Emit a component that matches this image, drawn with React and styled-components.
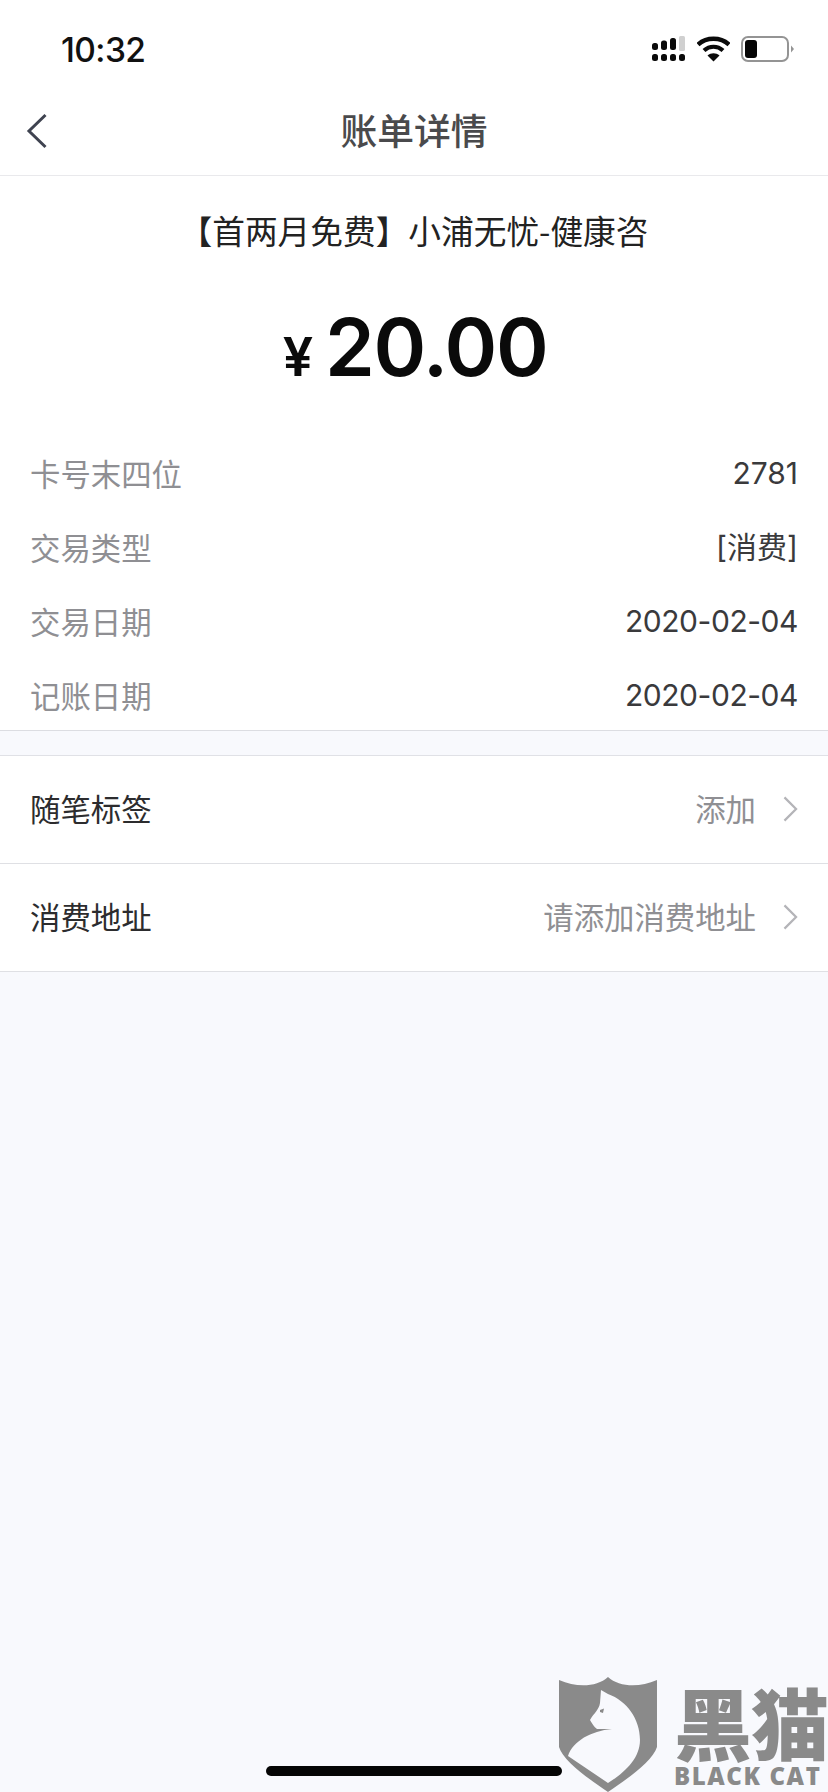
import React from "react";
import styled, { createGlobalStyle } from "styled-components";

const Global = createGlobalStyle`
  html, body { margin: 0; padding: 0; background: #f8f9fd; }
  body { font-family: "Inter", "Noto Sans CJK SC", sans-serif; }
`;
const CJK = `"Noto Sans CJK SC", "Noto Sans", sans-serif`;
const LATIN_CJK = `"Inter", "Noto Sans CJK SC", sans-serif`;

const Page = styled.div`
  position: relative;
  width: 828px;
  height: 1792px;
  overflow: hidden;
  background: #f8f9fd;
  display: flex;
  flex-direction: column;
`;
const StatusBar = styled.div`
  height: 90px;
  background: #fff;
  display: flex;
  align-items: center;
  justify-content: space-between;
  padding: 8px 33px 0 61px;
  box-sizing: border-box;
`;
const Clock = styled.span`
  font: 500 33.5px/1 "Inter", sans-serif;
  color: #111;
  letter-spacing: -0.6px;
  padding-top: 4px;
`;
const StatusIcons = styled.div`
  display: flex;
  align-items: center;
  gap: 11.5px;
`;
const NavBar = styled.header`
  position: relative;
  height: 86px;
  background: #fff;
  border-bottom: 1px solid #e9e9ec;
  box-sizing: border-box;
  display: flex;
  align-items: center;
  justify-content: center;
  padding-bottom: 6px;
`;
const BackButton = styled.button`
  position: absolute;
  left: 24px;
  top: 23px;
  padding: 0;
  border: 0;
  background: none;
  width: 26px;
  height: 38px;
`;
const NavTitle = styled.h1`
  margin: 0;
  font: 500 36.8px/1.2 ${CJK};
  color: #4a4a4c;
`;
const Summary = styled.section`
  background: #fff;
  border-bottom: 1px solid #dcdde2;
`;
const Merchant = styled.div`
  text-align: center;
  font: 400 32.7px/44px ${CJK};
  color: #222;
  padding-top: 32px;
  white-space: nowrap;
`;
const Amount = styled.div`
  display: flex;
  align-items: baseline;
  justify-content: center;
  padding: 39px 0 0 2px;
  height: 111px;
  color: #0a0a0a;
`;
const Currency = styled.span`
  font: 600 54px/1 "Inter", sans-serif;
  margin-right: 12px;
`;
const Value = styled.span`
  font: 600 80px/112px "Inter", sans-serif;
  letter-spacing: -1.4px;
`;
const InfoList = styled.div`
  padding: 34px 30px 0;
  margin-bottom: -2px;
`;
const InfoRow = styled.div`
  display: flex;
  align-items: center;
  justify-content: space-between;
  height: 74px;
`;
const InfoLabel = styled.span`
  font: 400 30.4px/1 ${CJK};
  color: #8f8f93;
`;
const InfoValue = styled.span`
  font: 400 30px/1 ${LATIN_CJK};
  color: #3a3a3c;
  letter-spacing: ${(p) => (p.$tight ? "-0.45px" : "0")};
`;
const ActionList = styled.section`
  margin-top: 24px;
  background: #fff;
  border-top: 1px solid #e0e1e6;
`;
const ActionRow = styled.div`
  height: 108px;
  box-sizing: border-box;
  border-bottom: 1px solid #dfe0e4;
  display: flex;
  align-items: center;
  justify-content: space-between;
  padding: 0 30px 2px;
`;
const ActionLabel = styled.span`
  font: 400 30.4px/1 ${CJK};
  color: #2c2c2e;
`;
const ActionValue = styled.span`
  display: flex;
  align-items: center;
  gap: 27px;
  font: 400 30.4px/1 ${CJK};
  color: #8f8f93;
`;
const HomeIndicator = styled.div`
  position: absolute;
  left: 266px;
  top: 1766px;
  width: 296px;
  height: 10px;
  border-radius: 5px;
  background: #050505;
`;
const Watermark = styled.div`
  position: absolute;
  right: 0;
  top: 1677px;
  width: 269px;
  display: flex;
  gap: 17px;
  color: #8a8a8a;
`;
const BrandText = styled.div`
  display: flex;
  flex-direction: column;
  align-items: flex-start;
`;
const BrandCn = styled.div`
  font: 900 78px/72px ${CJK};
  letter-spacing: -1px;
  margin-top: 8px;
  white-space: nowrap;
`;
const BrandEn = styled.div`
  font: 800 24px/24px "Open Sans", sans-serif;
  letter-spacing: 1.6px;
  white-space: nowrap;
  margin-top: 7px;
`;

const Signal = () => (
  <svg width="34" height="26" viewBox="0 0 34 26">
    <g fill="#0a0a0a">
      <rect x="1" y="7" width="6" height="7" rx="2.5" />
      <rect x="10" y="4.5" width="6" height="9.5" rx="2.5" />
      <rect x="19" y="2" width="6" height="12" rx="2.5" />
      <rect x="1" y="18" width="6" height="7" rx="2.5" />
      <rect x="10" y="18" width="6" height="7" rx="2.5" />
      <rect x="19" y="18" width="6" height="7" rx="2.5" />
      <rect x="28" y="18" width="6" height="7" rx="2.5" />
    </g>
    <rect x="28" y="0" width="6" height="15" rx="1.5" fill="#d0d0d0" />
  </svg>
);
const Wifi = () => (
  <svg width="33" height="26" viewBox="0 0 33 26">
    <path d="M1 8.5C9.5 .8 23.5 .8 32 8.5" fill="none" stroke="#0a0a0a" strokeWidth="4.4" />
    <path d="M7 14.5C12.5 9.5 20.5 9.5 26 14.5" fill="none" stroke="#0a0a0a" strokeWidth="4.2" />
    <path d="M16.5 25.5 10.5 19.5C14 16.5 19 16.5 22.5 19.5Z" fill="#0a0a0a" />
  </svg>
);
const Battery = () => (
  <svg width="54" height="26" viewBox="0 0 54 26">
    <rect x="1" y="1" width="46" height="24" rx="6" fill="#fff" stroke="#949494" strokeWidth="2" />
    <rect x="4" y="4" width="12" height="18" rx="3" fill="#050505" />
    <path d="M50 9.5 53 13 50 16.5Z" fill="#949494" />
  </svg>
);
const Chevron = ({ color, w, h, sw }) => (
  <svg width={w} height={h} viewBox="0 0 16 28">
    <path d="M1.5 1.5 14 14 1.5 26.5" fill="none" stroke={color} strokeWidth={sw} />
  </svg>
);
const Shield = () => (
  <svg width="98" height="115" viewBox="0 0 98 115">
    <path
      d="M49 0C38 10 18 11 0 3V70C4 84 30 102 49 115C68 102 94 84 98 70V3C80 11 60 10 49 0Z"
      fill="#8a8a8a"
    />
    <path
      d="M42 13 49 17C68 24 81 42 81 63C81 82 65 96 49 106L9 79C14 64 32 54 53 52L38 52C35 50 33 46 31 43C35 36 40 33 41 26Z"
      fill="#f8f9fd"
    />
    <path d="M41 33l4 -1.5 -1 4.5 -3 -1Z" fill="#8a8a8a" />
  </svg>
);

const infoRows = [
  ["卡号末四位", "2781"],
  ["交易类型", "[消费]"],
  ["交易日期", "2020-02-04", true],
  ["记账日期", "2020-02-04", true],
];
const actionRows = [
  ["随笔标签", "添加"],
  ["消费地址", "请添加消费地址"],
];

export default function App() {
  return (
    <Page>
      <Global />
      <StatusBar>
        <Clock>10:32</Clock>
        <StatusIcons>
          <Signal />
          <Wifi />
          <Battery />
        </StatusIcons>
      </StatusBar>
      <NavBar>
        <BackButton aria-label="返回">
          <svg width="22" height="36" viewBox="0 0 22 36">
            <path d="M19.5 2 3 18 19.5 34" fill="none" stroke="#3f4350" strokeWidth="3" />
          </svg>
        </BackButton>
        <NavTitle>账单详情</NavTitle>
      </NavBar>
      <Summary>
        <Merchant>【首两月免费】小浦无忧-健康咨</Merchant>
        <Amount>
          <Currency>¥</Currency>
          <Value>20.00</Value>
        </Amount>
        <InfoList>
          {infoRows.map(([k, v, tight]) => (
            <InfoRow key={k}>
              <InfoLabel>{k}</InfoLabel>
              <InfoValue $tight={tight}>{v}</InfoValue>
            </InfoRow>
          ))}
        </InfoList>
      </Summary>
      <ActionList>
        {actionRows.map(([k, v]) => (
          <ActionRow key={k}>
            <ActionLabel>{k}</ActionLabel>
            <ActionValue>
              {v}
              <Chevron color="#b4b4b8" w={15} h={26} sw={2.4} />
            </ActionValue>
          </ActionRow>
        ))}
      </ActionList>
      <Watermark>
        <Shield />
        <BrandText>
          <BrandCn>黑猫</BrandCn>
          <BrandEn>BLACK CAT</BrandEn>
        </BrandText>
      </Watermark>
      <HomeIndicator />
    </Page>
  );
}
